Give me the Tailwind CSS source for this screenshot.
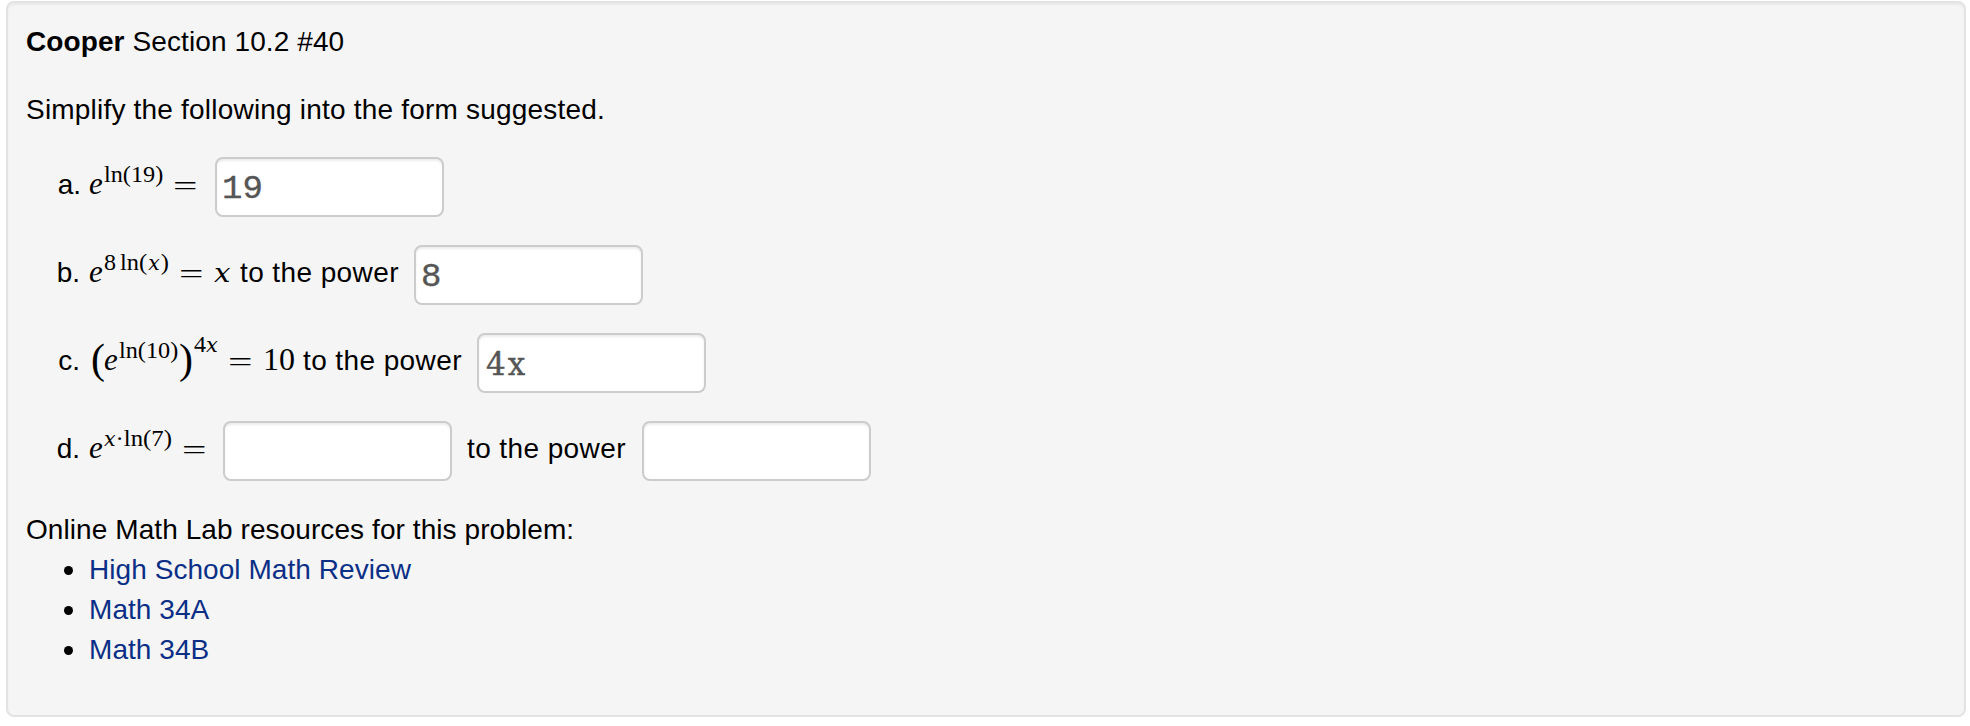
<!DOCTYPE html>
<html lang="en">
<head>
<meta charset="utf-8">
<title>Cooper Section 10.2 #40</title>
<script src="https://cdn.jsdelivr.net/npm/@tailwindcss/browser@4"></script>
</head>
<body class="bg-white pt-px pl-[6px] font-['Liberation_Sans',Arial,sans-serif] text-[28px] leading-[40px] text-black">
<main class="w-[1960px] h-[716px] rounded-[8px] border-2 border-[#e3e3e3] bg-[#f5f5f5] pt-[19px] pl-[18px] shadow-[inset_0_2px_2px_rgba(0,0,0,0.05)]">
  <p class="mb-[28px] tracking-[0.1px]"><strong>Cooper</strong> Section 10.2 #40</p>
  <p class="mb-[27px] tracking-[0.2px]">Simplify the following into the form suggested.</p>

  <ol class="flex flex-col gap-[28px]">
    <li class="flex h-[60px]">
      <div class="flex items-baseline whitespace-nowrap leading-[55px] w-[189px]">
        <span class="w-[63px] shrink-0 pr-[8px] text-right">a.</span>
        <span class="font-['Liberation_Serif',serif] flex items-baseline">
          <i class="w-[15px] text-[31px] leading-[40px]">e</i>
          <span class="w-[69px] text-[24px] leading-[30px] -translate-y-[12px] origin-left scale-x-[1.01]">ln(19)</span>
          <span class="w-[40px] text-[28px] leading-[30px] origin-left scale-x-[1.55] translate-y-px">=</span>
        </span>
      </div>
      <input class="w-[229px] h-[60px] rounded-[8px] border-2 border-[#ccc] bg-white pt-[3px] pl-[5px] font-['Liberation_Mono',monospace] text-[34px] text-[#555] [-webkit-text-stroke:0.4px_#555] shadow-[inset_0_2px_2px_rgba(0,0,0,0.075)]" value="19" aria-label="Answer a">
    </li>

    <li class="flex h-[60px]">
      <div class="flex items-baseline whitespace-nowrap leading-[55px] w-[388px]">
        <span class="w-[63px] shrink-0 pr-[9px] text-right">b.</span>
        <span class="font-['Liberation_Serif',serif] flex items-baseline">
          <i class="w-[15px] text-[31px] leading-[40px]">e</i>
          <span class="w-[16px] text-[24px] leading-[30px] -translate-y-[12px]">8</span>
          <span class="w-[59px] text-[24px] leading-[30px] -translate-y-[12px] origin-left scale-x-[1.02]">ln(<i class="font-['DejaVu_Serif',serif] text-[20px] mx-px inline-block">x</i>)</span>
          <span class="w-[35px] text-[28px] leading-[30px] origin-left scale-x-[1.55] translate-y-px">=</span>
          <i class="w-[26px] font-['DejaVu_Serif',serif] text-[26px] leading-[40px] origin-left scale-x-[1.12]">x</i>
        </span>
        <span class="tracking-[0.4px]">to the power</span>
      </div>
      <input class="w-[229px] h-[60px] rounded-[8px] border-2 border-[#ccc] bg-white pt-[3px] pl-[5px] font-['Liberation_Mono',monospace] text-[34px] text-[#555] [-webkit-text-stroke:0.4px_#555] shadow-[inset_0_2px_2px_rgba(0,0,0,0.075)]" value="8" aria-label="Answer b">
    </li>

    <li class="flex h-[60px]">
      <div class="flex items-baseline whitespace-nowrap leading-[55px] w-[451px]">
        <span class="w-[63px] shrink-0 pr-[9px] text-right">c.</span>
        <span class="font-['Liberation_Serif',serif] flex items-baseline">
          <span class="w-[15px] pl-[2px] text-[42px] leading-[30px] translate-y-[3px]">(</span>
          <i class="w-[15px] text-[31px] leading-[40px]">e</i>
          <span class="w-[60px] text-[24px] leading-[30px] -translate-y-[12px] origin-left scale-x-[1.01]">ln(10)</span>
          <span class="w-[15px] text-[42px] leading-[30px] translate-y-[3px]">)</span>
          <span class="w-[34px] text-[24px] leading-[20px] -translate-y-[18px]">4<i class="font-['DejaVu_Serif',serif] text-[21px]">x</i></span>
          <span class="w-[35px] text-[28px] leading-[30px] origin-left scale-x-[1.55] translate-y-px">=</span>
          <span class="w-[40px] text-[32px] leading-[40px]">10</span>
        </span>
        <span class="tracking-[0.4px]">to the power</span>
      </div>
      <input class="w-[229px] h-[60px] rounded-[8px] border-2 border-[#ccc] bg-white pt-px pl-[7px] font-['DejaVu_Serif',serif] text-[31px] tracking-[2px] text-[#555] [-webkit-text-stroke:0.4px_#555] shadow-[inset_0_2px_2px_rgba(0,0,0,0.075)]" value="4x" aria-label="Answer c">
    </li>

    <li class="flex h-[60px]">
      <div class="flex items-baseline whitespace-nowrap leading-[55px] w-[197px]">
        <span class="w-[63px] shrink-0 pr-[9px] text-right">d.</span>
        <span class="font-['Liberation_Serif',serif] flex items-baseline">
          <i class="w-[15px] text-[31px] leading-[40px]">e</i>
          <span class="w-[78px] text-[24px] leading-[30px] -translate-y-[12px] origin-left scale-x-[1.03]"><i class="font-['DejaVu_Serif',serif] text-[20px]">x</i>·ln(7)</span>
          <span class="w-[30px] text-[28px] leading-[30px] origin-left scale-x-[1.55] translate-y-px">=</span>
        </span>
      </div>
      <input class="w-[229px] h-[60px] rounded-[8px] border-2 border-[#ccc] bg-white pl-[6px] shadow-[inset_0_2px_2px_rgba(0,0,0,0.075)]" aria-label="Answer d, base">
      <span class="w-[190px] pl-[15px] leading-[55px] whitespace-nowrap tracking-[0.4px]">to the power</span>
      <input class="w-[229px] h-[60px] rounded-[8px] border-2 border-[#ccc] bg-white pl-[6px] shadow-[inset_0_2px_2px_rgba(0,0,0,0.075)]" aria-label="Answer d, power">
    </li>
  </ol>

  <p class="mt-[29px] tracking-[0.08px]">Online Math Lab resources for this problem:</p>
  <ul class="pl-[38px] tracking-[0.06px] text-[#0b2f86]">
    <li class="flex items-center gap-[16px]"><span class="size-[9px] rounded-full bg-black"></span><a>High School Math Review</a></li>
    <li class="flex items-center gap-[16px]"><span class="size-[9px] rounded-full bg-black"></span><a>Math 34A</a></li>
    <li class="flex items-center gap-[16px]"><span class="size-[9px] rounded-full bg-black"></span><a>Math 34B</a></li>
  </ul>
</main>
</body>
</html>
